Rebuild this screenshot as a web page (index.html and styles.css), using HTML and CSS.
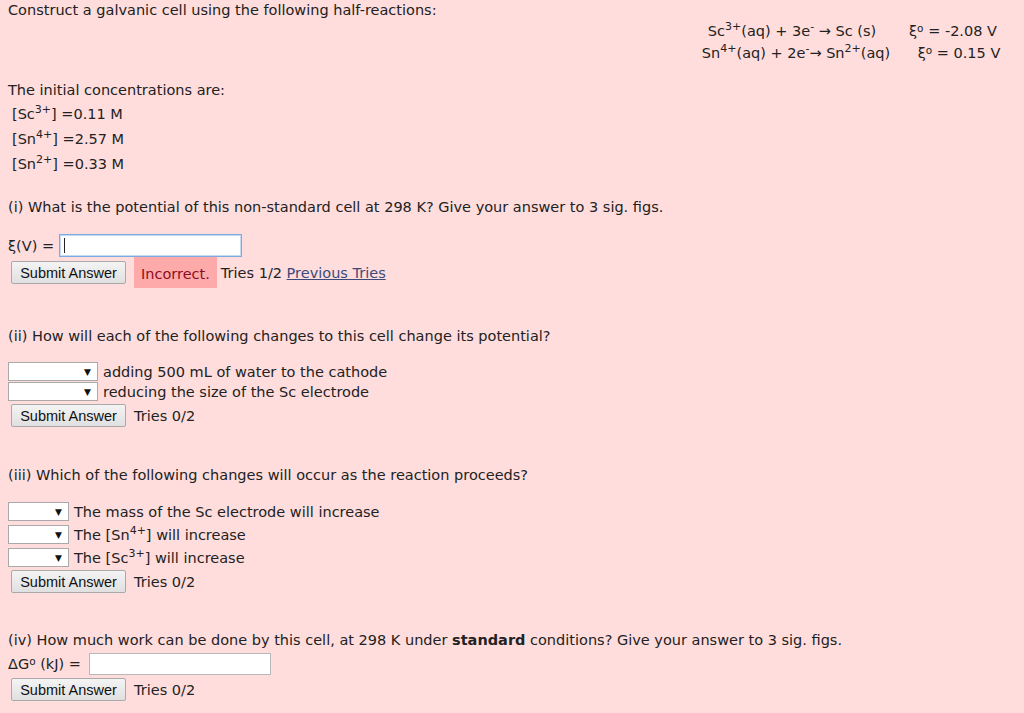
FILE: index.html
```html
<!DOCTYPE html>
<html>
<head>
<meta charset="utf-8">
<link rel="stylesheet" href="styles.css">
</head>
<body>
<div class="page">
  <p class="title">Construct a galvanic cell using the following half-reactions:</p>
  <div class="reactions">
    <div class="rxn-row">
      <span class="rxn rxn1">Sc<sup>3+</sup>(aq) + 3e<sup>-</sup> → Sc (s)</span>
      <span class="pot pot1">ξ<sup class="deg">o</sup> = -2.08 V</span>
    </div>
    <div class="rxn-row">
      <span class="rxn">Sn<sup>4+</sup>(aq) + 2e<sup>-</sup>→ Sn<sup>2+</sup>(aq)</span>
      <span class="pot pot2">ξ<sup class="deg">o</sup> = 0.15 V</span>
    </div>
  </div>

  <p class="intro">The initial concentrations are:</p>
  <div class="concs">
    <div class="conc">[Sc<sup>3+</sup>] =0.11 M</div>
    <div class="conc">[Sn<sup>4+</sup>] =2.57 M</div>
    <div class="conc">[Sn<sup>2+</sup>] =0.33 M</div>
  </div>

  <section class="q q1">
    <p class="qtext">(i) What is the potential of this non-standard cell at 298 K? Give your answer to 3 sig. figs.</p>
    <div class="field-row f1">
      <span class="label">ξ(V) =</span>
      <div class="input focused"><span class="caret"></span></div>
    </div>
    <div class="submit-row">
      <button class="btn">Submit Answer</button>
      <span class="incorrect">Incorrect.</span>
      <span class="tries">Tries 1/2 <a class="prev" href="#">Previous Tries</a></span>
    </div>
  </section>

  <section class="q q2">
    <p class="qtext">(ii) How will each of the following changes to this cell change its potential?</p>
    <div class="sel-list">
      <div class="sel-row"><div class="select wide"><span class="arrow">▼</span></div><span>adding 500 mL of water to the cathode</span></div>
      <div class="sel-row"><div class="select wide"><span class="arrow">▼</span></div><span>reducing the size of the Sc electrode</span></div>
    </div>
    <div class="submit-row plain">
      <button class="btn">Submit Answer</button>
      <span class="tries">Tries 0/2</span>
    </div>
  </section>

  <section class="q q3">
    <p class="qtext">(iii) Which of the following changes will occur as the reaction proceeds?</p>
    <div class="sel-list tall">
      <div class="sel-row"><div class="select narrow"><span class="arrow">▼</span></div><span>The mass of the Sc electrode will increase</span></div>
      <div class="sel-row"><div class="select narrow"><span class="arrow">▼</span></div><span>The [Sn<sup>4+</sup>] will increase</span></div>
      <div class="sel-row"><div class="select narrow"><span class="arrow">▼</span></div><span>The [Sc<sup>3+</sup>] will increase</span></div>
    </div>
    <div class="submit-row plain">
      <button class="btn">Submit Answer</button>
      <span class="tries">Tries 0/2</span>
    </div>
  </section>

  <section class="q q4">
    <p class="qtext">(iv) How much work can be done by this cell, at 298 K under <b>standard</b> conditions? Give your answer to 3 sig. figs.</p>
    <div class="field-row f4">
      <span class="label">ΔG<sup class="deg">o</sup> (kJ) =</span>
      <div class="input"></div>
    </div>
    <div class="submit-row plain">
      <button class="btn">Submit Answer</button>
      <span class="tries">Tries 0/2</span>
    </div>
  </section>
</div>
</body>
</html>
```

FILE: styles.css
```css
html, body {
  margin: 0;
  padding: 0;
  background: #ffdddd;
}
body {
  font-family: "DejaVu Sans", Verdana, sans-serif;
  font-size: 14.5px;
  color: #222;
}
.page {
  padding: 2px 8px 0 8px;
}
p {
  margin: 0;
}
sup {
  font-size: 11px;
  line-height: 0;
  vertical-align: 6px;
}
sup.deg {
  font-size: 10.5px;
  vertical-align: 4px;
}
.title {
  line-height: 16px;
}
.reactions {
  display: flex;
  flex-direction: column;
  align-items: flex-end;
  margin-top: 2px;
  padding-right: 0;
}
.rxn-row {
  display: flex;
  height: 22px;
  align-items: center;
}
.rxn {
  width: 212px;
  text-align: center;
}
.rxn1 {
  padding-right: 8px;
  box-sizing: border-box;
}
.pot {
  width: 114px;
  text-align: center;
}
.pot1 {
  padding-right: 12px;
  box-sizing: border-box;
}
.intro {
  margin-top: 18px;
  line-height: 16px;
}
.concs {
  margin-top: 4px;
  padding-left: 4px;
}
.conc {
  height: 25px;
  line-height: 25px;
}
.qtext {
  line-height: 16px;
}
.q1 { margin-top: 22px; }
.q2 { margin-top: 40px; }
.q3 { margin-top: 40px; }
.q4 { margin-top: 39px; }

.field-row {
  display: flex;
  align-items: center;
  gap: 5px;
}
.f1 { margin-top: 19px; height: 23px; }
.f4 { margin-top: 5px; height: 22px; gap: 8px; }
.input {
  width: 177px;
  height: 20px;
  background: #fff;
  border: 1px solid #b8b8b8;
  display: flex;
  align-items: center;
  padding-left: 4px;
  box-sizing: content-box;
}
.f1 .input { height: 21px; }
.f4 .input { width: 176px; }
.input.focused {
  border-color: #7ea9e2;
  box-shadow: 0 0 0 1px #c5d9f5 inset;
}
.caret {
  width: 1px;
  height: 15px;
  background: #222;
}
.submit-row {
  display: flex;
  align-items: center;
  height: 31px;
  padding-left: 3px;
}
.submit-row.plain {
  height: 23px;
  margin-top: 3px;
}
.btn {
  font-family: "Liberation Sans", Arial, sans-serif;
  font-size: 14.5px;
  color: #111;
  height: 23px;
  width: 115px;
  padding: 0;
  border: 1px solid #a9a9a9;
  border-radius: 2px;
  background: linear-gradient(#f4f4f4, #e0e0e0);
  margin-right: 8px;
}
.incorrect {
  background: #ffaaaa;
  color: #8b0e1e;
  height: 31px;
  line-height: 31px;
  padding: 2px 7px 0 7px;
  box-sizing: border-box;
  margin-right: 4px;
}
.tries {
  white-space: pre;
}
.prev {
  color: #3b4a7a;
  text-decoration: underline;
}
.sel-list {
  margin-top: 18px;
  display: flex;
  flex-direction: column;
  gap: 1px;
}
.sel-list.tall {
  margin-top: 19px;
  gap: 4px;
}
.sel-row {
  display: flex;
  align-items: center;
  gap: 5px;
}
.select {
  height: 17px;
  background: #fff;
  border: 1px solid #a9a9a9;
  display: flex;
  justify-content: flex-end;
  align-items: center;
  padding-right: 6px;
}
.select.wide { width: 82px; }
.select.narrow { width: 53px; }
.arrow {
  font-size: 9px;
  color: #111;
}
.tall .select { height: 17px; }
.tall .sel-row { height: 19px; }
```
